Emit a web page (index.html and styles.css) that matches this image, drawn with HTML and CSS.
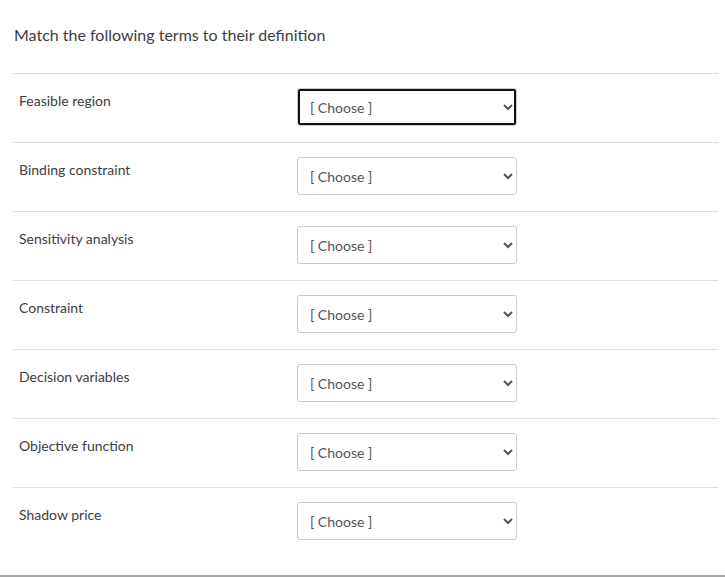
FILE: index.html
```html
<!DOCTYPE html>
<html lang="en">
<head>
<meta charset="utf-8">
<title>Matching question</title>
<link rel="stylesheet" href="styles.css">
</head>
<body>
<div class="quiz">
  <p class="title">Match the following terms to their definition</p>
  <div class="rows">
    <div class="row">
      <div class="label">Feasible region</div>
      <select class="choice focused"><option>[ Choose ]</option></select>
    </div>
    <div class="row">
      <div class="label">Binding constraint</div>
      <select class="choice"><option>[ Choose ]</option></select>
    </div>
    <div class="row">
      <div class="label">Sensitivity analysis</div>
      <select class="choice"><option>[ Choose ]</option></select>
    </div>
    <div class="row">
      <div class="label">Constraint</div>
      <select class="choice"><option>[ Choose ]</option></select>
    </div>
    <div class="row">
      <div class="label">Decision variables</div>
      <select class="choice"><option>[ Choose ]</option></select>
    </div>
    <div class="row">
      <div class="label">Objective function</div>
      <select class="choice"><option>[ Choose ]</option></select>
    </div>
    <div class="row">
      <div class="label">Shadow price</div>
      <select class="choice"><option>[ Choose ]</option></select>
    </div>
  </div>
</div>
</body>
</html>
```
FILE: styles.css
```css
html, body {
  margin: 0;
  padding: 0;
  background: #fff;
}
body {
  font-family: Lato, "Noto Sans", sans-serif;
  color: #3a3a3a;
}
.quiz {
  border-bottom: 2px solid #a6a6a6;
  padding-bottom: 19px;
}
.title {
  margin: 0 0 28px 0;
  padding: 25px 0 0 14px;
  font-size: 16px;
  line-height: 20px;
  color: #3d3d3d;
}
.rows {
  margin: 0 7px 0 13px;
}
.row {
  display: flex;
  align-items: flex-start;
  border-top: 1px solid #dedede;
  padding: 14px 0 16px 6px;
}
.label {
  width: 278px;
  margin-top: 3px;
  font-size: 14px;
  line-height: 20px;
  color: #3d3d3d;
}
.choice {
  width: 220px;
  height: 38px;
  box-sizing: border-box;
  border: 1px solid #cbcbcb;
  border-radius: 3px;
  background-color: #fff;
  padding: 0 10px 0 8px;
  font-family: Lato, "Noto Sans", sans-serif;
  font-size: 14px;
  color: #555;
}
.focused {
  outline: 2px solid #111;
  outline-offset: -3px;
}
```
